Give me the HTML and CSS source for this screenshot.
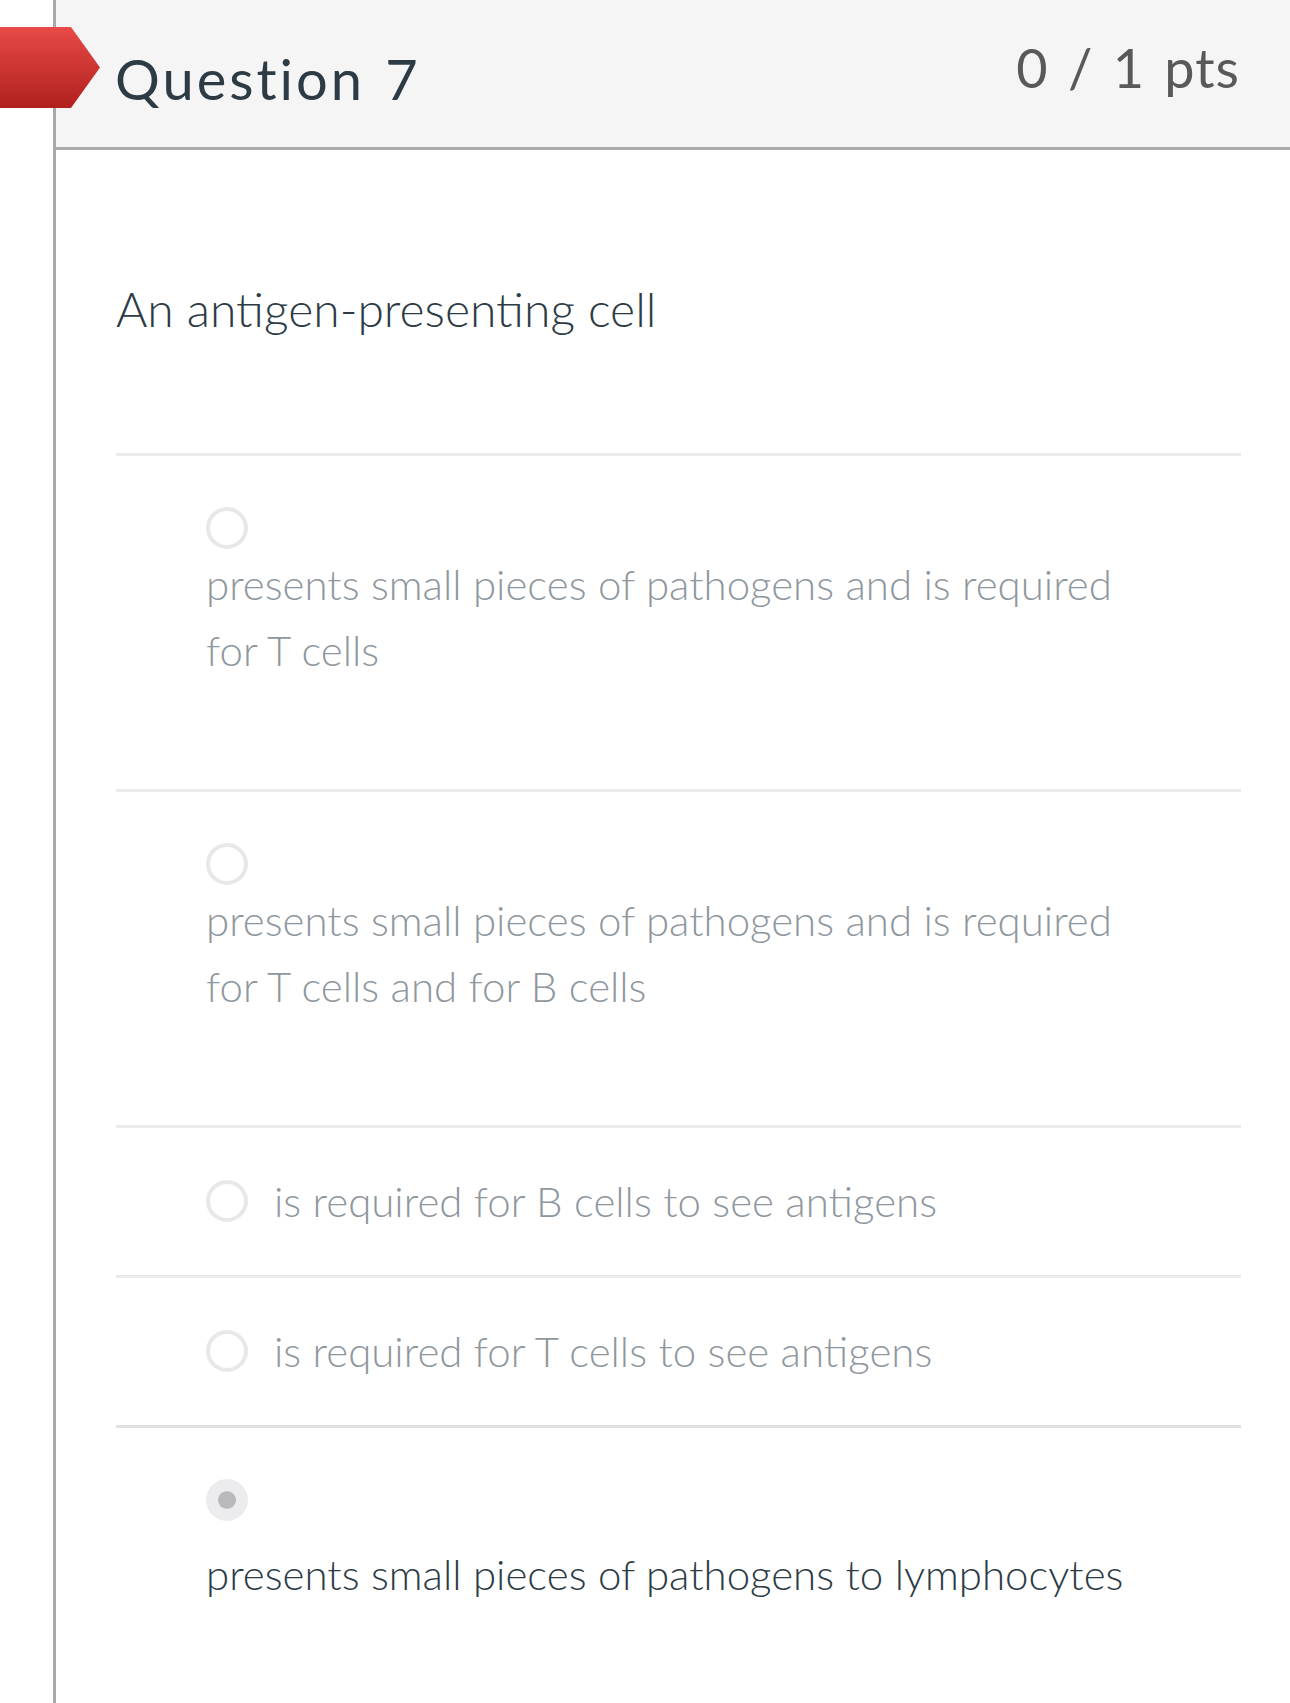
FILE: index.html
```html
<!DOCTYPE html>
<html lang="en">
<head>
<meta charset="utf-8">
<title>Question 7</title>
<link rel="stylesheet" href="styles.css">
</head>
<body>
<div class="quiz">
  <div class="flag">
    <svg width="101" height="82" viewBox="0 0 101 82" aria-hidden="true">
      <defs>
        <linearGradient id="flagGrad" x1="0" y1="0" x2="0" y2="1">
          <stop offset="0" stop-color="#e84a47"/>
          <stop offset="1" stop-color="#b0211d"/>
        </linearGradient>
      </defs>
      <polygon points="0,0 71,0 100,40.5 71,81 0,81" fill="url(#flagGrad)"/>
    </svg>
  </div>
  <div class="question">
    <header class="q-header">
      <h2 class="q-title">Question 7</h2>
      <div class="q-points">0 / 1 pts</div>
    </header>
    <div class="q-body">
      <p class="q-text">An antigen-presenting cell</p>
      <div class="answers">
        <div class="answer stacked">
          <span class="radio"></span>
          <div class="label muted">presents small pieces of pathogens and is required for T cells</div>
        </div>
        <div class="answer stacked">
          <span class="radio"></span>
          <div class="label muted">presents small pieces of pathogens and is required for T cells and for B cells</div>
        </div>
        <div class="answer inline">
          <span class="radio"></span>
          <div class="label muted">is required for B cells to see antigens</div>
        </div>
        <div class="answer inline">
          <span class="radio"></span>
          <div class="label muted">is required for T cells to see antigens</div>
        </div>
        <div class="answer stacked selected">
          <span class="radio checked"></span>
          <div class="label">presents small pieces of pathogens to lymphocytes</div>
        </div>
      </div>
    </div>
  </div>
</div>
</body>
</html>
```

FILE: styles.css
```css
html, body {
  margin: 0;
  padding: 0;
  background: #ffffff;
}

body {
  font-family: Lato, "Open Sans", "Liberation Sans", sans-serif;
  color: #2d3b45;
}

.quiz {
  position: relative;
  min-height: 1703px;
}

.flag {
  position: absolute;
  left: 0;
  top: 27px;
  width: 101px;
  height: 82px;
  z-index: 2;
}

.flag svg {
  display: block;
}

.question {
  margin-left: 53px;
  border-left: 3px solid #a9a9a9;
  min-height: 1703px;
}

.q-header {
  display: flex;
  justify-content: space-between;
  align-items: flex-start;
  height: 147px;
  background: #f5f5f5;
  border-bottom: 3px solid #ababab;
  padding: 0 50px 0 59px;
}

.q-title {
  margin: 45px 0 0 0;
  font-size: 56px;
  font-weight: 400;
  letter-spacing: 3px;
  word-spacing: 3px;
  line-height: 1.2;
  color: #2d3b45;
}

.q-points {
  margin-top: 36px;
  font-size: 54px;
  font-weight: 400;
  letter-spacing: 1px;
  word-spacing: 4.5px;
  line-height: 1.2;
  color: #595959;
}

.q-body {
  padding: 0 49px 0 60px;
}

.q-text {
  margin: 130px 0 115px 0;
  font-size: 48px;
  font-weight: 300;
  line-height: 1.2;
  color: #2d3b45;
}

.answer {
  border-top: 3px solid #ebebeb;
  padding-left: 90px;
  padding-right: 90px;
}

.answer.stacked {
  display: flex;
  flex-direction: column;
  align-items: flex-start;
  padding-top: 51px;
  padding-bottom: 106px;
}

.answer.stacked .label {
  margin-top: 2px;
}

.answer.inline {
  display: flex;
  align-items: center;
  padding-top: 40px;
  padding-bottom: 41px;
}

.answer.inline .label {
  margin-left: 26px;
}

.answer.selected {
  border-top-color: #e0e0e0;
  padding-bottom: 60px;
}

.answer.selected .label {
  margin-top: 20px;
}

.radio {
  display: block;
  box-sizing: border-box;
  width: 42px;
  height: 42px;
  border-radius: 50%;
  border: 4px solid #e8e8ea;
  background: #ffffff;
  flex-shrink: 0;
  position: relative;
}

.radio.checked {
  background: #ececee;
  border-color: #ececee;
}

.radio.checked::after {
  content: "";
  position: absolute;
  left: 8px;
  top: 8px;
  width: 18px;
  height: 18px;
  border-radius: 50%;
  background: #b9b9bd;
}

.label {
  font-size: 42px;
  font-weight: 300;
  line-height: 66px;
  color: #2d3b45;
}

.label.muted {
  color: #8f979e;
}
```
